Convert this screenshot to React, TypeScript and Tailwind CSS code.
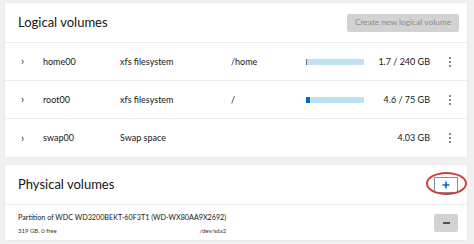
const rows = [
  { name: "home00", type: "xfs filesystem", mount: "/home", used: 2, size: "1.7 / 240 GB" },
  { name: "root00", type: "xfs filesystem", mount: "/", used: 7, size: "4.6 / 75 GB" },
  { name: "swap00", type: "Swap space", mount: "", used: -1, size: "4.03 GB" },
];

function Kebab() {
  return (
    <svg width="4" height="12" viewBox="0 0 4 12" className="text-[#6a6e73]">
      <circle cx="2" cy="2" r="1.1" fill="currentColor" />
      <circle cx="2" cy="6" r="1.1" fill="currentColor" />
      <circle cx="2" cy="10" r="1.1" fill="currentColor" />
    </svg>
  );
}

export default function App() {
  return (
    <div className="w-[474px] h-[244px] overflow-hidden bg-[#f0f0f0] pt-[3px] pl-[5px] pr-[7px] font-['Lato',sans-serif] text-[#151515]">
      {/* Logical volumes */}
      <div className="bg-white shadow-[0_0_2px_rgba(0,0,0,0.08)]">
        <div className="h-[40px] flex items-center justify-between pl-[13px] pr-[8px] border-b border-[#ededed]">
          <h2 className="text-[13px] leading-none">Logical volumes</h2>
          <button className="h-[18px] w-[112px] rounded-[2px] bg-[#d2d2d2] text-[#8a8d90] text-[8.4px]">
            Create new logical volume
          </button>
        </div>
        {rows.map((r, i) => (
          <div
            key={r.name}
            className={`h-[38px] flex items-center text-[9px] ${i < 2 ? "border-b border-[#ededed]" : ""}`}
          >
            <span className="w-[38px] pl-[16px] text-[11px] text-[#333]">›</span>
            <span className="w-[77px]">{r.name}</span>
            <span className="w-[111px]">{r.type}</span>
            <span className="w-[75px]">{r.mount}</span>
            <div className="w-[58px]">
              {r.used >= 0 && (
                <div className="w-[58px] h-[6px] bg-[#bee1f4] flex">
                  <div className={r.used > 3 ? "w-[4px] bg-[#06c]" : "w-[1px] bg-[#6a6e73]"} />
                </div>
              )}
            </div>
            <span className="w-[66px] text-right whitespace-nowrap">{r.size}</span>
            <div className="ml-[18px] flex">
              <Kebab />
            </div>
          </div>
        ))}
      </div>

      {/* Physical volumes */}
      <div className="mt-[8px] bg-white shadow-[0_0_2px_rgba(0,0,0,0.08)]">
        <div className="h-[40px] flex items-center justify-between pl-[13px] pr-[9px] border-b border-[#ededed]">
          <h2 className="text-[13px] leading-none">Physical volumes</h2>
          <div className="relative flex">
            <button className="w-[24px] h-[16px] border border-[#8a8d90] bg-white text-[#06c] flex items-center justify-center">
              <svg width="8" height="8" viewBox="0 0 8 8">
                <path d="M4 0.5v7M0.5 4h7" stroke="currentColor" strokeWidth="1.6" />
              </svg>
            </button>
            <div className="absolute left-[-8px] top-[-5px] w-[41px] h-[23px] rounded-[50%] border-2 border-[#c9413e]" />
          </div>
        </div>
        <div className="h-[35px] flex items-center justify-between pl-[13px] pr-[9px]">
          <div className="inline-flex flex-col text-[7.2px] leading-[13px] pt-[3px]">
            <span>Partition of WDC WD3200BEKT-60F3T1 (WD-WX80AA9X2692)</span>
            <div className="flex justify-between text-[6px] text-[#333]">
              <span>319 GB, 0 free</span>
              <span>/dev/sda2</span>
            </div>
          </div>
          <button className="w-[24px] h-[18px] rounded-[2px] bg-[#d2d2d2] flex items-center justify-center">
            <div className="w-[7px] h-[2px] bg-[#4f5255]" />
          </button>
        </div>
      </div>
    </div>
  );
}
